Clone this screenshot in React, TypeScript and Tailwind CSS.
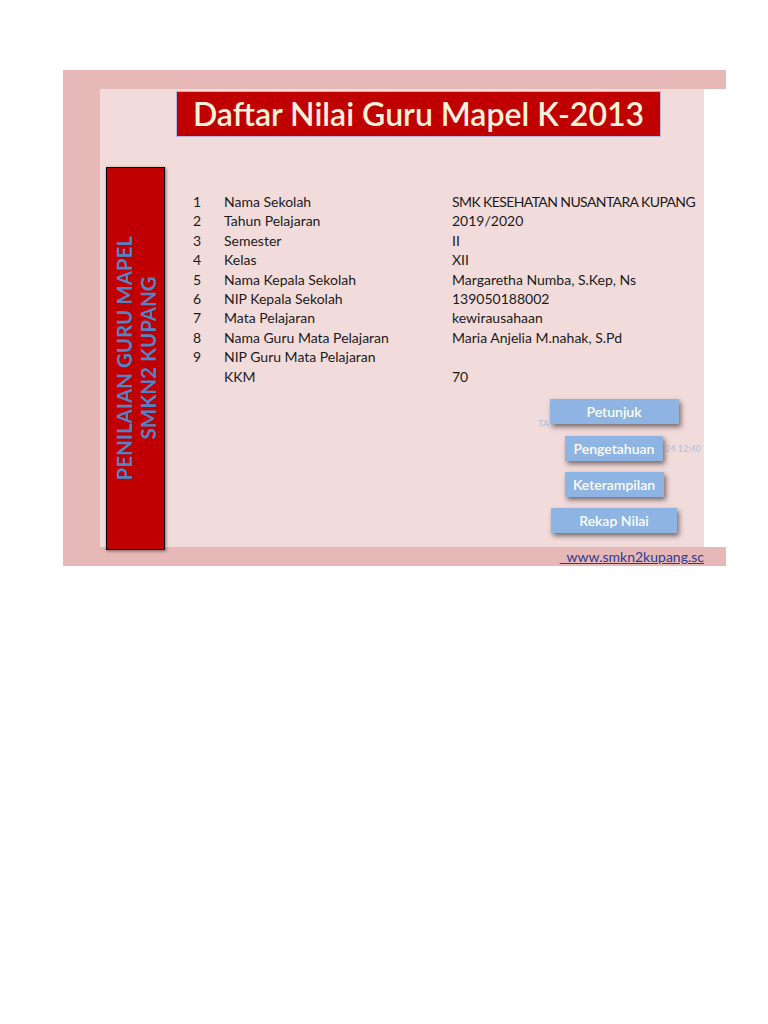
export default function App() {
  const rows = [
    { no: '1', label: 'Nama Sekolah', value: 'SMK KESEHATAN NUSANTARA KUPANG', tight: true },
    { no: '2', label: 'Tahun Pelajaran', value: '2019/2020' },
    { no: '3', label: 'Semester', value: 'II' },
    { no: '4', label: 'Kelas', value: 'XII' },
    { no: '5', label: 'Nama Kepala Sekolah', value: 'Margaretha Numba, S.Kep, Ns' },
    { no: '6', label: 'NIP Kepala Sekolah', value: '139050188002' },
    { no: '7', label: 'Mata Pelajaran', value: 'kewirausahaan' },
    { no: '8', label: 'Nama Guru Mata Pelajaran', value: 'Maria Anjelia M.nahak, S.Pd' },
    { no: '9', label: 'NIP Guru Mata Pelajaran', value: '' },
    { no: '', label: 'KKM', value: '70' },
  ];

  const buttons = [
    { label: 'Petunjuk', w: 'w-[129px]', mt: 'mt-0' },
    { label: 'Pengetahuan', w: 'w-[98px]', mt: 'mt-[12px]' },
    { label: 'Keterampilan', w: 'w-[99px]', mt: 'mt-[11px]' },
    { label: 'Rekap Nilai', w: 'w-[126px]', mt: 'mt-[11px]' },
  ];

  return (
    <div className="min-h-[1024px] w-[768px] bg-white pl-[63px] pt-[70px] font-['Lato',sans-serif] text-[#1a1a1a]">
      <div className="w-[663px]">
        {/* top band */}
        <div className="h-[19px] bg-[#e6b8b7]" />

        {/* middle */}
        <div className="flex h-[458px]">
          <div className="w-[37px] shrink-0 bg-[#e6b8b7]" />
          <div className="relative z-10 flex w-[604px] shrink-0 bg-[#f2dcdb] pl-[6px]">
            {/* vertical label */}
            <div className="shrink-0 pt-[78px]">
              <div className="relative z-10 flex h-[383px] w-[59px] items-center justify-center border border-black bg-[#c00000] shadow-[1px_1px_3px_rgba(0,0,0,0.5)]">
                <div className="rotate-180 whitespace-nowrap text-center text-[20.5px] font-bold leading-[24px] text-[#5383c6] [writing-mode:vertical-rl]">
                  <div>PENILAIAN GURU MAPEL</div>
                  <div>SMKN2 KUPANG</div>
                </div>
              </div>
            </div>

            {/* main column */}
            <div className="ml-[11px] w-[485px] shrink-0 pt-[2px]">
              <div className="flex h-[46px] w-[485px] items-center justify-center whitespace-nowrap border border-[#b9b4dc] bg-[#c00000] text-[32px] font-semibold text-[#f7f1dc]">
                Daftar Nilai Guru Mapel K-2013
              </div>

              <div className="mt-[55px] text-[14px] leading-[19.4px]">
                {rows.map((r) => (
                  <div key={r.label} className="flex h-[19.4px] whitespace-nowrap">
                    <div className="w-[17px] shrink-0" />
                    <div className="w-[31px] shrink-0">{r.no}</div>
                    <div className="w-[228px] shrink-0">{r.label}</div>
                    <div className={r.tight ? 'shrink-0 tracking-[-0.6px]' : 'shrink-0'}>{r.value}</div>
                  </div>
                ))}
              </div>

              {/* buttons */}
              <div className="relative ml-[358px] mt-[13px] flex w-[160px] flex-col items-center">
                <span className="absolute left-[4px] top-[18px] whitespace-nowrap text-[9px] text-[#a9c0e0]">TA</span>
                <span className="absolute left-[131px] top-[43px] whitespace-nowrap text-[9px] text-[#a9c0e0]">24 12:40</span>
                {buttons.map((b) => (
                  <div
                    key={b.label}
                    className={`relative flex h-[25px] items-center justify-center whitespace-nowrap bg-[#8db4e2] text-[14px] font-semibold text-white shadow-[2px_3px_5px_rgba(40,30,30,0.6)] ${b.w} ${b.mt}`}
                  >
                    {b.label}
                  </div>
                ))}
              </div>
            </div>
          </div>
          <div className="w-[22px] shrink-0 bg-white" />
        </div>

        {/* bottom band */}
        <div className="flex h-[19px] items-center justify-end bg-[#e6b8b7] pr-[22px]">
          <span className="whitespace-pre text-[14px] leading-[19px] text-[#2e3a94] underline">{'  www.smkn2kupang.sc'}</span>
        </div>
      </div>
    </div>
  );
}
